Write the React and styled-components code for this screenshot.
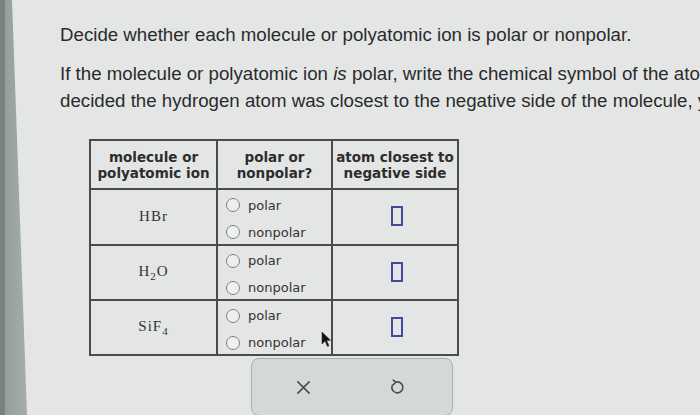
import React from 'react';
import styled, { createGlobalStyle } from 'styled-components';

const Global = createGlobalStyle`
  html, body { margin: 0; padding: 0; background: #e4e6e5; overflow: hidden; }
  body { width: 700px; height: 415px; }
`;

const Page = styled.div`
  position: relative;
  display: flex;
  width: 700px;
  height: 415px;
  overflow: hidden;
  background: #e4e6e5;
`;

const Bezel = styled.div`
  flex: 0 0 27px;
  background: linear-gradient(90deg, #78817f 0, #78817f 4px, #96a09e 6px, #a4adab 100%);
  clip-path: polygon(0 0, 12px 0, 27px 100%, 0 100%);
`;

const Main = styled.div`
  flex: 1;
  min-width: 0;
  padding: 24px 0 0 33px;
  display: flex;
  flex-direction: column;
  align-items: flex-start;
`;

const Prompt = styled.p`
  margin: ${p => p.$top}px 0 0 0;
  font-family: "Liberation Sans", Arial, sans-serif;
  font-size: 18.7px;
  line-height: ${p => p.$lh}px;
  color: #2a2b2b;
  white-space: nowrap;
`;

const Line = styled.span`
  display: block;
  white-space: nowrap;
`;

const Grid = styled.table`
  margin: 25px 0 0 29px;
  border-collapse: collapse;
  table-layout: fixed;
  width: 362px;
  font-family: "DejaVu Sans", Verdana, sans-serif;
  color: #2d2d2d;
`;

const Head = styled.th`
  width: ${p => p.$w}px;
  height: 47px;
  padding: 0;
  border: 2px solid #4a4b4b;
  font-size: 13.5px;
  font-weight: bold;
  line-height: 16px;
  text-align: center;
  vertical-align: middle;
`;

const Cell = styled.td`
  height: ${p => p.$h}px;
  padding: 0;
  border: 2px solid #4a4b4b;
  vertical-align: middle;
  text-align: ${p => p.$align || 'center'};
`;

const Formula = styled.span`
  font-family: "Liberation Serif", "Times New Roman", serif;
  font-size: 15px;
  letter-spacing: 1px;
  color: #333;
  position: relative;
  top: -2px;
`;

const Sub = styled.sub`
  font-size: 11px;
  vertical-align: -4px;
  line-height: 0;
`;

const Options = styled.div`
  display: flex;
  flex-direction: column;
  gap: 12px;
  padding: 3px 0 0 8px;
`;

const Option = styled.label`
  display: flex;
  align-items: center;
  gap: 8px;
  font-size: 13px;
  line-height: 15px;
  color: #333;
`;

const Radio = styled.span`
  width: 12px;
  height: 12px;
  border-radius: 50%;
  border: 1px solid #7d8281;
  background: #eef0ef;
  flex: 0 0 auto;
`;

const AnswerBox = styled.span`
  display: inline-block;
  width: 8px;
  height: 16px;
  border: 2px solid #45479a;
  margin-left: 4px;
  position: relative;
  top: 1px;
`;

const Panel = styled.div`
  margin: 2px 0 0 191px;
  width: 200px;
  height: 70px;
  border: 1px solid #a9aeac;
  border-radius: 8px;
  background: #d4d8d6;
  display: flex;
  align-items: flex-start;
`;

const IconButton = styled.button`
  flex: 1;
  height: 56px;
  border: none;
  background: transparent;
  padding: 0 ${p => p.$pr || 0}px 0 ${p => p.$pl || 0}px;
  display: flex;
  align-items: center;
  justify-content: center;
  color: #435257;
`;

const Cursor = styled.svg`
  position: absolute;
  left: 321px;
  top: 331px;
`;

const rows = [
  { f: <>HBr</>, h: 54 },
  { f: <>H<Sub>2</Sub>O</>, h: 53 },
  { f: <>SiF<Sub>4</Sub></>, h: 53 },
];

export default function App() {
  return (
    <Page>
      <Global />
      <Bezel />
      <Main>
        <Prompt $top={0} $lh={22}>
          Decide whether each molecule or polyatomic ion is polar or nonpolar.
        </Prompt>
        <Prompt $top={14} $lh={27}>
          <Line>
            If the molecule or polyatomic ion <i>is</i> polar, write the chemical symbol of the atom closest to the negative side. If you
          </Line>
          <Line>
            decided the hydrogen atom was closest to the negative side of the molecule, you'll find you can't write the chemical symbol.
          </Line>
        </Prompt>
        <Grid>
          <thead>
            <tr>
              <Head $w={125}>molecule or<br />polyatomic ion</Head>
              <Head $w={113}>polar or<br />nonpolar?</Head>
              <Head $w={124}>atom closest to<br />negative side</Head>
            </tr>
          </thead>
          <tbody>
            {rows.map((r, i) => (
              <tr key={i}>
                <Cell $h={r.h}><Formula>{r.f}</Formula></Cell>
                <Cell $h={r.h} $align="left">
                  <Options>
                    <Option><Radio />polar</Option>
                    <Option><Radio />nonpolar</Option>
                  </Options>
                </Cell>
                <Cell $h={r.h}><AnswerBox /></Cell>
              </tr>
            ))}
          </tbody>
        </Grid>
        <Panel>
          <IconButton $pl={4} aria-label="clear">
            <svg width="15" height="15" viewBox="0 0 16 16" fill="none" stroke="currentColor" strokeWidth="1.7" strokeLinecap="round">
              <path d="M2 2 L14 14 M14 2 L2 14" />
            </svg>
          </IconButton>
          <IconButton $pr={8} aria-label="undo">
            <svg width="16" height="16" viewBox="0 0 16 16" fill="none" stroke="currentColor" strokeWidth="1.6" strokeLinecap="round" strokeLinejoin="round">
              <path d="M6.5 3.2 A5.5 5.5 0 1 1 3.4 6" />
              <path d="M4.2 1.2 L6.6 3.2 L4.6 5.6" />
            </svg>
          </IconButton>
        </Panel>
      </Main>
      <Cursor width="10" height="17" viewBox="0 0 10 17">
        <path d="M1 1 L1 13 L4 10 L6.5 15.5 L8 14.8 L5.6 9.4 L9.5 9.2 Z" fill="#111" stroke="#333" strokeWidth="0.6" />
      </Cursor>
    </Page>
  );
}
